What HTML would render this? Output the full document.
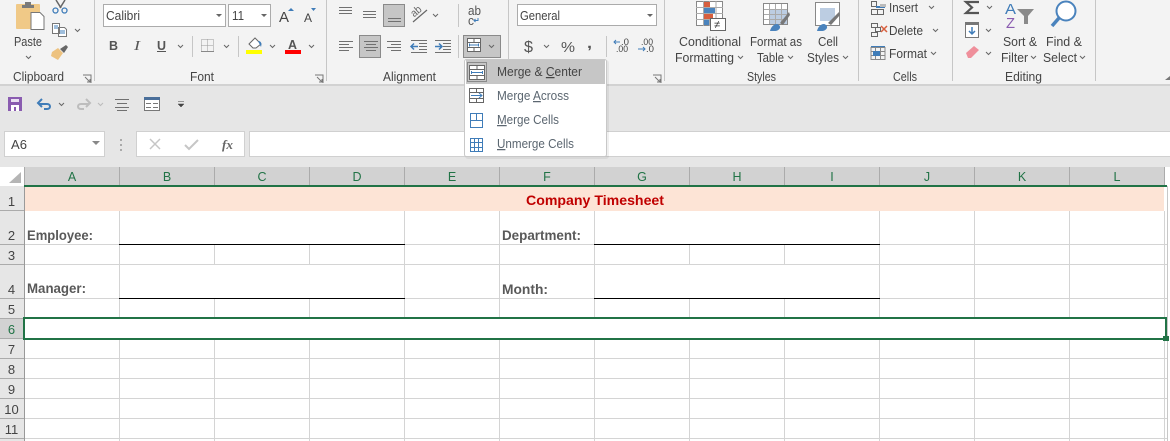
<!DOCTYPE html>
<html><head><meta charset="utf-8"><title>Excel</title>
<style>
html,body{margin:0;padding:0;background:#fff;overflow:hidden}
svg{display:block}
text{font-family:"Liberation Sans",sans-serif;font-size:12.5px;fill:#444}
.b{font-weight:bold;font-size:14px;fill:#595959}
.m{fill:#5b6670}
.h{fill:#217346;text-anchor:middle}
.r{text-anchor:middle;fill:#444;font-size:13px}
.g{fill:none;stroke:#d4d4d4;stroke-width:1;shape-rendering:crispEdges}
.l{fill:none;stroke:#707070;stroke-width:1;shape-rendering:crispEdges}
.c{fill:none;stroke:#666;stroke-width:1}
</style></head><body>
<svg width="1170" height="441" viewBox="0 0 1170 441" xmlns="http://www.w3.org/2000/svg">
<defs><path id="c" class="c" d="M0 0l2.500 2.500L5 0"/>
<path id="k" fill="none" stroke="#777" d="M0 0h8v8M2 2l5 5M7 4v3H4"/></defs>
<rect width="1170" height="441" fill="#fff"/>
<rect width="1170" height="85" fill="#f3f3f3"/>
<rect y="85" width="1170" height="82" fill="#e6e6e6"/>
<rect y="84" width="1170" height="2" fill="#d2d2d2"/>
<!-- separators -->
<path class="g" style="stroke:#c6c6c6" d="M94.500 0V81M326.500 0V81M508.500 0V81M664.500 0V81M858.500 0V81M952.500 0V81M1095.500 0V81M458.500 4V27M458.500 35V58M192.500 36V57M238.500 36V57M606.500 36V57"/>
<!-- clipboard -->
<rect x="16" y="4" width="24" height="25" rx="1" fill="#f0c987"/>
<path d="M22 5h3V2h6v3h3v3H22z" fill="#7a7a7a"/>
<path d="M31 12.500h9l4 4v13H31z" fill="#fff" stroke="#777"/>
<text x="14" y="46" textLength="28" lengthAdjust="spacingAndGlyphs">Paste</text>
<use href="#c" x="26" y="56"/>
<g fill="none" stroke="#3f7cb8" stroke-width="1.300"><circle cx="55.500" cy="10.500" r="2.500"/><circle cx="64.500" cy="10.500" r="2.500"/></g>
<path d="M56 0l5 8M65 0l-5 8" stroke="#666" stroke-width="1.500" fill="none"/>
<path d="M52.500 23.500h7v10h-7zM58.500 27.500h6l2 2v7h-8z" fill="#fff" stroke="#777"/>
<path d="M60 31h5M60 33h5M54 26h4M54 28h4" stroke="#3f7cb8"/>
<use href="#c" x="75" y="29"/>
<path d="M52 52l6-4 5 5-5 7-7-4z" fill="#edc27f"/><path d="M60 49l6-4 2 2-4 6z" fill="#666"/>
<text x="13" y="81" textLength="51" lengthAdjust="spacingAndGlyphs">Clipboard</text>
<use href="#k" x="83" y="75"/>
<!-- font -->
<rect x="103.500" y="4.500" width="122" height="22" fill="#fff" stroke="#ababab"/>
<rect x="228.500" y="4.500" width="42" height="22" fill="#fff" stroke="#ababab"/>
<text x="106" y="20" textLength="34" lengthAdjust="spacingAndGlyphs">Calibri</text>
<text x="232" y="20" textLength="12" lengthAdjust="spacingAndGlyphs">11</text>
<path d="M216 14h6l-3 3zM261 14h6l-3 3z" fill="#666"/>
<text x="279" y="22" style="font-size:15px" textLength="10" lengthAdjust="spacingAndGlyphs">A</text>
<path d="M288 11l3-3 3 3z" fill="#3f7cb8"/>
<text x="304" y="22" style="font-size:12px" textLength="8" lengthAdjust="spacingAndGlyphs">A</text>
<path d="M311 8h5l-2.500 3z" fill="#3f7cb8"/>
<text x="109" y="50" style="font-weight:bold;fill:#555;font-size:13px" textLength="9" lengthAdjust="spacingAndGlyphs">B</text>
<text x="134" y="50" style="font-style:italic;font-family:'Liberation Serif',serif;font-size:14px;fill:#555" textLength="6" lengthAdjust="spacingAndGlyphs">I</text>
<text x="157" y="50" style="font-weight:bold;fill:#555;font-size:13px" textLength="9" lengthAdjust="spacingAndGlyphs">U</text>
<path d="M157 51.500h9" stroke="#555"/>
<use href="#c" x="178" y="45"/>
<path d="M201.500 39.500h12v12h-12zM207.500 39.500v12M201.500 45.500h12" fill="none" stroke="#999" stroke-dasharray="1 1" style="shape-rendering:crispEdges"/>
<path d="M201 51.500h13" stroke="#888"/>
<use href="#c" x="224" y="45"/>
<path d="M249 44l6-6 6 6-5 4h-3z" fill="#fff" stroke="#666"/><path d="M258 41c3 0 4 2 3 6z" fill="#3f7cb8"/>
<rect x="246" y="50" width="16" height="4" fill="#ff0"/>
<use href="#c" x="270" y="45"/>
<text x="288" y="49" style="font-weight:bold;fill:#555;font-size:13px" textLength="9" lengthAdjust="spacingAndGlyphs">A</text>
<rect x="285" y="50" width="16" height="4" fill="#f00"/>
<use href="#c" x="309" y="45"/>
<text x="190" y="81" textLength="24" lengthAdjust="spacingAndGlyphs">Font</text>
<use href="#k" x="315" y="75"/>
<!-- alignment -->
<rect x="383.500" y="4.500" width="21" height="22" fill="#c6c6c6" stroke="#8a8a8a"/>
<rect x="359.500" y="35.500" width="21" height="22" fill="#c6c6c6" stroke="#8a8a8a"/>
<rect x="463.500" y="35.500" width="37" height="22" fill="#c6c6c6" stroke="#8a8a8a"/>
<path class="l" d="M339 7.500h13M339 10.500h13M339 13.500h13M363 11.500h13M363 14.500h13M363 17.500h13M388 18.500h13M388 21.500h13M339 41.500h14M339 44.500h10M339 47.500h14M339 50.500h10M364 41.500h14M366 44.500h10M364 47.500h14M366 50.500h10M387 41.500h14M391 44.500h10M387 47.500h14M391 50.500h10M411 40.500h16M419 43.500h8M419 46.500h8M419 49.500h8M411 52.500h16M435 40.500h16M443 43.500h8M443 46.500h8M443 49.500h8M435 52.500h16"/>
<path d="M411 46.500h7M414 43.500l-3 3 3 3" fill="none" stroke="#3f7cb8" stroke-width="1.500"/>
<path d="M435 46.500h7M439 43.500l3 3-3 3" fill="none" stroke="#3f7cb8" stroke-width="1.500"/>
<path d="M413 22l14-12" stroke="#666" stroke-width="1.200"/>
<text x="411" y="15" transform="rotate(-40 416 12)" style="font-size:11px;fill:#666" textLength="11" lengthAdjust="spacingAndGlyphs">ab</text>
<use href="#c" x="433" y="14"/>
<text x="468" y="15" style="fill:#555" textLength="13" lengthAdjust="spacingAndGlyphs">ab</text>
<text x="468" y="25" style="fill:#555" textLength="6" lengthAdjust="spacingAndGlyphs">c</text>
<path d="M478 18v2.500h-4M475.500 19l-1.500 1.500 1.500 1.500" fill="none" stroke="#3f7cb8"/>
<path d="M467.500 38.500h13v13h-13zM467.500 42.500h13M467.500 47.500h13M474 38.500v4M474 47.500v4" fill="#fff" stroke="#666"/>
<path d="M469 45h10M469.500 43.500v3M478.500 43.500v3" stroke="#3f7cb8" fill="none"/>
<use href="#c" x="489" y="45"/>
<text x="383" y="81" textLength="53" lengthAdjust="spacingAndGlyphs">Alignment</text>
<use href="#k" x="653" y="75"/>
<!-- number -->
<rect x="517.500" y="4.500" width="139" height="21" fill="#fff" stroke="#ababab"/>
<text x="520" y="20" textLength="40" lengthAdjust="spacingAndGlyphs">General</text>
<path d="M647 14h6l-3 3z" fill="#666"/>
<text x="524" y="52" style="font-size:16px;fill:#555" textLength="9" lengthAdjust="spacingAndGlyphs">$</text>
<use href="#c" x="544" y="45"/>
<text x="561" y="52" style="font-size:15px;fill:#555" textLength="14" lengthAdjust="spacingAndGlyphs">%</text>
<text x="587" y="48" style="font-weight:bold;font-size:15px;fill:#555" textLength="5" lengthAdjust="spacingAndGlyphs">,</text>
<text x="621" y="45" style="font-size:9px" textLength="8" lengthAdjust="spacingAndGlyphs">.0</text>
<text x="616" y="52" style="font-size:9px" textLength="12" lengthAdjust="spacingAndGlyphs">.00</text>
<text x="641" y="45" style="font-size:9px" textLength="12" lengthAdjust="spacingAndGlyphs">.00</text>
<text x="646" y="52" style="font-size:9px" textLength="8" lengthAdjust="spacingAndGlyphs">.0</text>
<path d="M614 42h6M616 40l-2 2 2 2M638 49h7M643 47l2 2-2 2" fill="none" stroke="#3f7cb8"/>
<!-- styles -->
<path d="M696.500 1.500h26v24h-26z" fill="#fff" stroke="#888"/>
<path d="M703.500 1v25M709.500 1v25M716 1v25M696 7.500h27M696 13.500h27M696 19.500h27" stroke="#aaa" fill="none"/>
<rect x="704" y="2" width="6" height="5" fill="#d75f3e"/><rect x="704" y="8" width="11" height="5" fill="#4a83bd"/><rect x="704" y="14" width="9" height="5" fill="#d75f3e"/><rect x="704" y="20" width="5" height="5" fill="#4a83bd"/>
<rect x="710.500" y="18.500" width="15" height="12" fill="#fff" stroke="#666"/>
<text x="714" y="28" style="font-size:11px;fill:#333">≠</text>
<rect x="763.500" y="3.500" width="24" height="21" fill="#fff" stroke="#888"/>
<rect x="770" y="9" width="17" height="15" fill="#bccde2"/>
<path d="M769.500 4v20M775.500 4v20M781.500 4v20M764 9.500h23M764 14.500h23M764 19.500h23" stroke="#aaa" fill="none"/>
<path d="M770 31c1-5 6-9 9-6s-1 6-4 6z" fill="#4a83bd"/><path d="M780 23l9-11 1 3-7 10z" fill="#777"/>
<rect x="815.500" y="2.500" width="24" height="23" fill="#fff" stroke="#888"/>
<rect x="820" y="8" width="15" height="13" fill="#bccde2"/>
<path d="M817 31c1-5 6-9 9-6s-1 6-4 6z" fill="#4a83bd"/><path d="M828 23l11-11 1 3-9 10z" fill="#777"/>
<text x="679" y="46" textLength="62" lengthAdjust="spacingAndGlyphs">Conditional</text>
<text x="675" y="62" textLength="59" lengthAdjust="spacingAndGlyphs">Formatting</text><use href="#c" x="738" y="56"/>
<text x="750" y="46" textLength="52" lengthAdjust="spacingAndGlyphs">Format as</text>
<text x="757" y="62" textLength="27" lengthAdjust="spacingAndGlyphs">Table</text><use href="#c" x="788" y="56"/>
<text x="818" y="46" textLength="20" lengthAdjust="spacingAndGlyphs">Cell</text>
<text x="807" y="62" textLength="32" lengthAdjust="spacingAndGlyphs">Styles</text><use href="#c" x="843" y="56"/>
<text x="747" y="81" textLength="29" lengthAdjust="spacingAndGlyphs">Styles</text>
<!-- cells -->
<path d="M871.500 1.500h5v5h-5zM871.500 9.500h12v5h-12zM877.500 9.500v5M871.500 9.500v5" fill="none" stroke="#666"/>
<path d="M876 7h9" stroke="#3f7cb8" stroke-width="2"/><rect x="880" y="4" width="6" height="3" fill="#bbb"/>
<text x="889" y="12" textLength="29" lengthAdjust="spacingAndGlyphs">Insert</text><use href="#c" x="929" y="6"/>
<path d="M871.500 23.500h6v4h-6zM875.500 27.500h5v4h-5zM871.500 32.500h6v4h-6z" fill="none" stroke="#666"/>
<path d="M881 26l6 6M887 26l-6 6" stroke="#d75f3e" stroke-width="1.500"/>
<text x="889" y="35" textLength="34" lengthAdjust="spacingAndGlyphs">Delete</text><use href="#c" x="933" y="29"/>
<path d="M871 47.500h14v12h-14zM871 51.500h14M871 55.500h14M875.500 47v13M880.500 47v13" fill="none" stroke="#888"/>
<rect x="873" y="51" width="7" height="5" fill="#3f7cb8"/>
<path d="M871 46.500h14" stroke="#3f7cb8"/>
<text x="889" y="58" textLength="38" lengthAdjust="spacingAndGlyphs">Format</text><use href="#c" x="931" y="52"/>
<text x="893" y="81" textLength="24" lengthAdjust="spacingAndGlyphs">Cells</text>
<!-- editing -->
<path d="M979 2H966l6 5.500L966 13h13" fill="none" stroke="#555" stroke-width="2.200"/>
<use href="#c" x="987" y="6"/>
<rect x="965.500" y="22.500" width="13" height="15" fill="#fff" stroke="#777"/>
<rect x="965" y="22" width="14" height="3" fill="#777"/>
<path d="M972 27v7M969 31l3 3 3-3" fill="none" stroke="#3f7cb8" stroke-width="1.500"/>
<use href="#c" x="986" y="29"/>
<path d="M966 53l8-7 5 4-8 8h-3z" fill="#ef8f9b"/>
<use href="#c" x="986" y="52"/>
<text x="1005" y="14" style="font-size:15px;fill:#3f7cb8" textLength="11" lengthAdjust="spacingAndGlyphs">A</text>
<text x="1006" y="28" style="font-size:15px;fill:#8a5cb0" textLength="9" lengthAdjust="spacingAndGlyphs">Z</text>
<path d="M1017 9h17l-6 7v8h-4v-8z" fill="#8a8a8a"/>
<circle cx="1066" cy="11" r="9.500" fill="#fff" stroke="#4a83bd" stroke-width="2"/>
<path d="M1059 18l-7 8" stroke="#4a83bd" stroke-width="3.500"/>
<text x="1003" y="46" textLength="34" lengthAdjust="spacingAndGlyphs">Sort &amp;</text>
<text x="1001" y="62" textLength="27" lengthAdjust="spacingAndGlyphs">Filter</text><use href="#c" x="1031" y="56"/>
<text x="1046" y="46" textLength="36" lengthAdjust="spacingAndGlyphs">Find &amp;</text>
<text x="1043" y="62" textLength="34" lengthAdjust="spacingAndGlyphs">Select</text><use href="#c" x="1080" y="56"/>
<text x="1005" y="81" textLength="37" lengthAdjust="spacingAndGlyphs">Editing</text>
<path d="M1165 80l5-4v4z" fill="#777"/>
<!-- qat -->
<path d="M8 97h14v14H8z" fill="#8a5cb0"/><rect x="11" y="99" width="8" height="3" fill="#e9e0f1"/><rect x="11" y="105" width="8" height="6" fill="#fff"/><rect x="14" y="107" width="2" height="4" fill="#8a5cb0"/>
<path d="M39 104h8c4 0 4 5 0 5h-3M42 99l-4 4 4 4" fill="none" stroke="#3f7cb8" stroke-width="2"/>
<use href="#c" x="59" y="103"/>
<path d="M89 104h-8c-4 0-4 5 0 5h3M86 99l4 4-4 4" fill="none" stroke="#bdbdbd" stroke-width="2"/>
<path d="M98 103l2.500 2.500L103 103" fill="none" stroke="#bbb"/>
<path class="l" d="M115 99.500h14M117 103.500h10M115 107.500h14M117 110.500h10"/>
<rect x="144.500" y="97.500" width="15" height="13" fill="#fff" stroke="#777"/>
<rect x="144" y="97" width="16" height="3" fill="#4a6f9a"/>
<path d="M146 103.500h5M153 103.500h5M153 107.500h5M146 107.500h5" stroke="#777" fill="none"/>
<path d="M178 101.500h6M178 104h6l-3 3z" fill="#444" stroke="#444" stroke-width=".5"/>
<!-- formula bar -->
<rect x="4.500" y="131.500" width="100" height="25" fill="#fff" stroke="#d0d0d0"/>
<text x="11" y="149" style="font-size:13px" textLength="16" lengthAdjust="spacingAndGlyphs">A6</text>
<path d="M92 141h8l-4 4z" fill="#888"/>
<path d="M121 139v2M121 144v2M121 149v2" stroke="#aaa" stroke-width="2"/>
<rect x="136.500" y="131.500" width="108" height="25" fill="#fff" stroke="#d0d0d0"/>
<path d="M150 139l10 10M160 139l-10 10" stroke="#c6c6c6" stroke-width="1.500"/>
<path d="M185 145l4 4 9-9" fill="none" stroke="#c6c6c6" stroke-width="2"/>
<text x="222" y="149" style="font-family:'Liberation Serif',serif;font-style:italic;font-weight:bold;font-size:13px;fill:#666" textLength="11" lengthAdjust="spacingAndGlyphs">fx</text>
<rect x="249.500" y="131.500" width="921" height="25" fill="#fff" stroke="#d0d0d0"/>
<!-- headers -->
<rect x="24" y="167" width="1140" height="18" fill="#d2d2d2"/>
<rect x="0" y="186" width="24" height="255" fill="#e6e6e6"/>
<rect x="0" y="318" width="24" height="21" fill="#d2d2d2"/>
<path d="M21 172v11H9z" fill="#b5b5b5"/>
<path d="M24.500 167V186M119.500 167V185M214.500 167V185M309.500 167V185M404.500 167V185M499.500 167V185M594.500 167V185M689.500 167V185M784.500 167V185M879.500 167V185M974.500 167V185M1069.500 167V185M1164.500 167V185" fill="none" stroke="#ababab" style="shape-rendering:crispEdges"/>
<path d="M0 210.500H24M0 244.500H24M0 264.500H24M0 298.500H24M0 318.500H24M0 338.500H24M0 358.500H24M0 378.500H24M0 398.500H24M0 418.500H24M0 438.500H24" fill="none" stroke="#ababab" style="shape-rendering:crispEdges"/>
<text class="h" x="72" y="181">A</text><text class="h" x="167" y="181">B</text><text class="h" x="262" y="181">C</text><text class="h" x="357" y="181">D</text><text class="h" x="452" y="181">E</text><text class="h" x="547" y="181">F</text><text class="h" x="642" y="181">G</text><text class="h" x="737" y="181">H</text><text class="h" x="832" y="181">I</text><text class="h" x="927" y="181">J</text><text class="h" x="1022" y="181">K</text><text class="h" x="1117" y="181">L</text>
<text class="r" x="11.500" y="206">1</text><text class="r" x="11.500" y="240">2</text><text class="r" x="11.500" y="260">3</text><text class="r" x="11.500" y="294">4</text><text class="r" x="11.500" y="314">5</text><text class="r" x="11.500" y="334" style="fill:#217346">6</text><text class="r" x="11.500" y="354">7</text><text class="r" x="11.500" y="374">8</text><text class="r" x="11.500" y="394">9</text><text class="r" x="11.500" y="414">10</text><text class="r" x="11.500" y="434">11</text>
<!-- grid -->
<rect x="24" y="187" width="1140" height="24" fill="#fde4d6"/>
<path class="g" d="M119.500 211V244M404.500 211V244M499.500 211V244M594.500 211V244M879.500 211V244M974.500 211V244M1069.500 211V244M1164.500 211V339
M119.500 244V264M214.500 244V264M309.500 244V264M404.500 244V264M499.500 244V264M594.500 244V264M689.500 244V264M784.500 244V264M879.500 244V264M974.500 244V264M1069.500 244V264
M119.500 264V298M404.500 264V298M499.500 264V298M594.500 264V298M879.500 264V298M974.500 264V298M1069.500 264V298
M119.500 298V318M214.500 298V318M309.500 298V318M404.500 298V318M499.500 298V318M594.500 298V318M689.500 298V318M784.500 298V318M879.500 298V318M974.500 298V318M1069.500 298V318
M119.500 339V441M214.500 339V441M309.500 339V441M404.500 339V441M499.500 339V441M594.500 339V441M689.500 339V441M784.500 339V441M879.500 339V441M974.500 339V441M1069.500 339V441M1164.500 339V441
M24 244.500H1167M24 264.500H1167M24 298.500H1167M24 318.500H1167M24 358.500H1167M24 378.500H1167M24 398.500H1167M24 418.500H1167M24 438.500H1167"/>
<path d="M1167.500 186V441" stroke="#c8c8c8" style="shape-rendering:crispEdges"/>
<path d="M24.500 186V441" stroke="#9a9a9a" style="shape-rendering:crispEdges"/>
<rect x="24" y="185" width="1143" height="2" fill="#217346"/>
<path d="M119 244.500H405M594 244.500H880M119 298.500H405M594 298.500H880" stroke="#000" style="shape-rendering:crispEdges"/>
<text x="526" y="205" class="b" style="fill:#c00000" textLength="138" lengthAdjust="spacingAndGlyphs">Company Timesheet</text>
<text x="27" y="240" class="b" textLength="66" lengthAdjust="spacingAndGlyphs">Employee:</text>
<text x="502" y="240" class="b" textLength="79" lengthAdjust="spacingAndGlyphs">Department:</text>
<text x="27" y="293" class="b" textLength="59" lengthAdjust="spacingAndGlyphs">Manager:</text>
<text x="502" y="294" class="b" textLength="46" lengthAdjust="spacingAndGlyphs">Month:</text>
<rect x="24" y="318" width="1142" height="21" fill="#fff" stroke="#217346" stroke-width="2"/>
<rect x="1163" y="336" width="6" height="5" fill="#217346"/>
<!-- menu -->
<rect x="465" y="60" width="144" height="99" rx="3" fill="#000" fill-opacity=".06"/>
<rect x="464.500" y="59.500" width="142" height="97" rx="2" fill="#fff" stroke="#c8c8c8"/>
<rect x="466" y="60" width="139" height="24" fill="#c6c6c6"/>
<rect x="467.500" y="62.500" width="19" height="19" fill="#c6c6c6" stroke="#8a8a8a"/>
<path d="M469.500 65.500h15v14h-15zM469.500 69.500h15M469.500 75.500h15M477 65.500v4M477 75.500v4" fill="#fff" stroke="#666"/>
<path d="M471 72.500h12M471.500 71v3M482.500 71v3" stroke="#3f7cb8" fill="none"/>
<path d="M469.500 88.500h14v14h-14zM469.500 92.500h14M469.500 98.500h14M476.500 88.500v4M476.500 98.500v4" fill="none" stroke="#666"/>
<path d="M471 95.500h11M479 93l3 2.500-3 2.500" fill="none" stroke="#3f7cb8"/>
<path d="M470.500 113.500h12v14h-12zM470.500 120.500h12M476.500 113.500v7" fill="none" stroke="#3f7cb8"/>
<path d="M470.500 138.500h12v13h-12zM474.500 138.500v13M478.500 138.500v13M470.500 142.500h12M470.500 147.500h12" fill="none" stroke="#3f7cb8"/>
<text x="497" y="76" textLength="85" lengthAdjust="spacingAndGlyphs">Merge &amp; <tspan text-decoration="underline">C</tspan>enter</text>
<text x="497" y="100" class="m" textLength="72" lengthAdjust="spacingAndGlyphs">Merge <tspan text-decoration="underline">A</tspan>cross</text>
<text x="497" y="124" class="m" textLength="62" lengthAdjust="spacingAndGlyphs"><tspan text-decoration="underline">M</tspan>erge Cells</text>
<text x="497" y="148" class="m" textLength="77" lengthAdjust="spacingAndGlyphs"><tspan text-decoration="underline">U</tspan>nmerge Cells</text>
</svg>
</body></html>
